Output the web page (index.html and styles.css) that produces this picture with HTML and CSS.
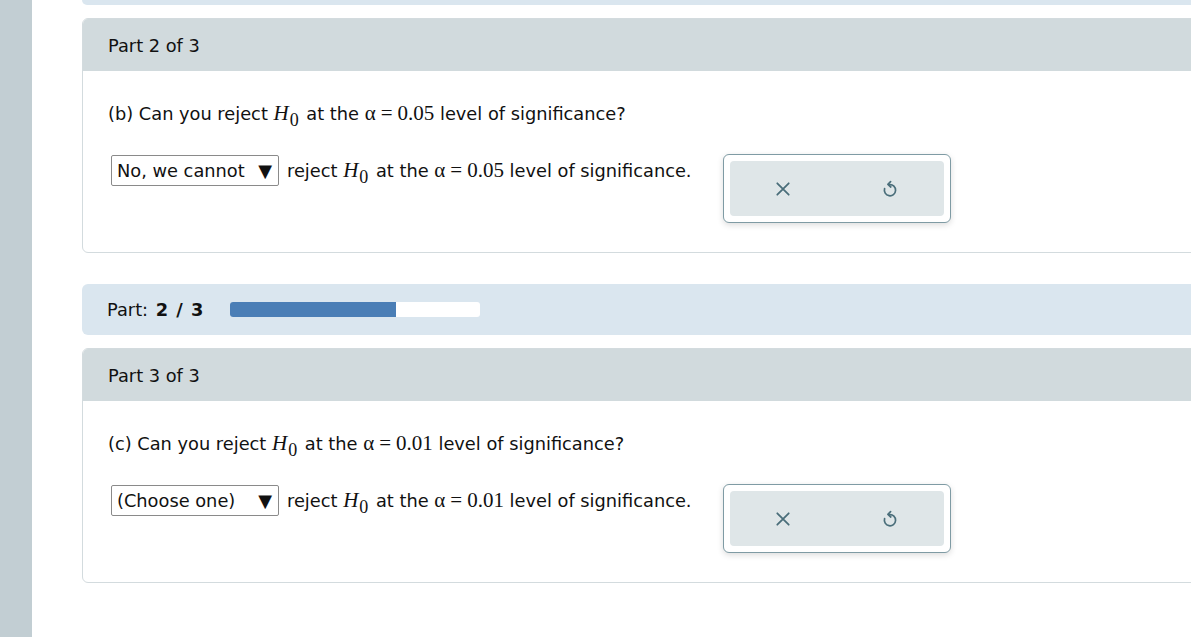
FILE: index.html
```html
<!DOCTYPE html>
<html>
<head>
<meta charset="utf-8">
<link rel="stylesheet" href="styles.css">
</head>
<body>
<div class="page">
  <div class="sidebar"></div>
  <div class="main">
    <div class="top-strip"></div>

    <section class="card">
      <div class="card-head">Part 2 of 3</div>
      <div class="card-body">
        <p class="question">(b) Can you reject <span class="math"><i>H</i><sub>0</sub></span> at the <span class="math">α<span class="eq">=</span>0.05</span> level of significance?</p>
        <div class="answer-row">
          <div class="select"><span>No, we cannot</span><span class="arrow">▼</span></div>
          <p class="answer-text">reject <span class="math"><i>H</i><sub>0</sub></span> at the <span class="math">α<span class="eq">=</span>0.05</span> level of significance.</p>
          <div class="tools">
            <div class="tools-inner">
              <button class="tool" aria-label="Clear">
                <svg width="16" height="16" viewBox="0 0 16 16"><path d="M2.3 2.3 L13.7 13.7 M13.7 2.3 L2.3 13.7" stroke="#4a6e7a" stroke-width="1.8" fill="none" stroke-linecap="round"/></svg>
              </button>
              <button class="tool" aria-label="Undo">
                <svg width="18" height="18" viewBox="0 0 18 18"><path d="M8.6 4.6 A5.6 5.6 0 1 1 3.6 8.6" stroke="#4a6e7a" stroke-width="1.7" fill="none" stroke-linecap="round"/><path d="M9.6 1.6 L6.9 4.4 L9.8 7.0" stroke="#4a6e7a" stroke-width="1.7" fill="none" stroke-linecap="round" stroke-linejoin="round"/></svg>
              </button>
            </div>
          </div>
        </div>
      </div>
    </section>

    <div class="progress">
      <span class="progress-label">Part: <b>2 / 3</b></span>
      <div class="bar"><div class="bar-fill" style="width:66.4%"></div></div>
    </div>

    <section class="card">
      <div class="card-head">Part 3 of 3</div>
      <div class="card-body">
        <p class="question">(c) Can you reject <span class="math"><i>H</i><sub>0</sub></span> at the <span class="math">α<span class="eq">=</span>0.01</span> level of significance?</p>
        <div class="answer-row">
          <div class="select"><span>(Choose one)</span><span class="arrow">▼</span></div>
          <p class="answer-text">reject <span class="math"><i>H</i><sub>0</sub></span> at the <span class="math">α<span class="eq">=</span>0.01</span> level of significance.</p>
          <div class="tools">
            <div class="tools-inner">
              <button class="tool" aria-label="Clear">
                <svg width="16" height="16" viewBox="0 0 16 16"><path d="M2.3 2.3 L13.7 13.7 M13.7 2.3 L2.3 13.7" stroke="#4a6e7a" stroke-width="1.8" fill="none" stroke-linecap="round"/></svg>
              </button>
              <button class="tool" aria-label="Undo">
                <svg width="18" height="18" viewBox="0 0 18 18"><path d="M8.6 4.6 A5.6 5.6 0 1 1 3.6 8.6" stroke="#4a6e7a" stroke-width="1.7" fill="none" stroke-linecap="round"/><path d="M9.6 1.6 L6.9 4.4 L9.8 7.0" stroke="#4a6e7a" stroke-width="1.7" fill="none" stroke-linecap="round" stroke-linejoin="round"/></svg>
              </button>
            </div>
          </div>
        </div>
      </div>
    </section>
  </div>
</div>
</body>
</html>
```

FILE: styles.css
```css
html, body {
  margin: 0;
  padding: 0;
  overflow: hidden;
  background: #fff;
}
body {
  font-family: "DejaVu Sans", Verdana, sans-serif;
  font-size: 17.8px;
  color: #111;
}
.page {
  display: flex;
  min-height: 637px;
}
.sidebar {
  width: 32px;
  flex: none;
  background: #c2ced3;
}
.main {
  flex: 1;
  padding-left: 50px;
  margin-right: -30px;
}
.top-strip {
  height: 5px;
  background: #dae6ef;
  border-radius: 0 0 0 6px;
  margin-bottom: 13px;
}
.card {
  border: 1px solid #d3dbde;
  border-radius: 6px;
  overflow: hidden;
}
.card-head {
  background: #d1dadd;
  display: flex;
  align-items: center;
  padding-left: 26px;
  margin: -1px -1px 0 -1px;
  padding-top: 2px;
  box-sizing: border-box;
  height: 53px;
}
.card-body {
  padding: 30px 25px 29px;
}
.question {
  margin: 0;
  line-height: 24px;
}
.math {
  font-family: "Liberation Serif", "Times New Roman", serif;
  font-size: 21px;
}
.math i {
  font-style: italic;
}
.math sub {
  font-size: 18px;
  vertical-align: -6px;
  line-height: 0;
  margin-left: 1px;
  margin-right: 2px;
}
.eq {
  margin: 0 5px;
}
.answer-row {
  display: flex;
  align-items: flex-start;
  margin-top: 28px;
}
.select {
  width: 168px;
  height: 31px;
  box-sizing: border-box;
  border: 1px solid #8a8a8a;
  border-radius: 2px;
  margin: 1px 0 0 3px;
  padding: 0 6px 0 5px;
  display: flex;
  align-items: center;
  justify-content: space-between;
}
.arrow {
  font-size: 18px;
}
.answer-text {
  margin: 4px 0 0 8px;
  line-height: 24px;
}
.tools {
  margin-left: 31px;
  width: 228px;
  height: 69px;
  box-sizing: border-box;
  border: 1px solid #7f9ba4;
  border-radius: 6px;
  padding: 6px;
  box-shadow: 0 2px 6px rgba(0, 0, 0, 0.14);
  background: #fff;
}
.tools-inner {
  height: 100%;
  background: #dfe6e8;
  border-radius: 4px;
  display: flex;
}
.tool {
  flex: 1;
  border: 0;
  background: transparent;
  padding: 0;
  display: flex;
  align-items: center;
  justify-content: center;
}
.progress {
  margin-top: 31px;
  margin-bottom: 13px;
  height: 51px;
  background: #dae6ef;
  border-radius: 6px 0 0 6px;
  display: flex;
  align-items: center;
  padding-left: 25px;
}
.progress-label {
  width: 123px;
  flex: none;
}
.progress-label b {
  font-weight: bold;
  word-spacing: 2px;
  margin-left: 2px;
}
.bar {
  width: 250px;
  height: 15px;
  background: #fff;
  border-radius: 3px;
  overflow: hidden;
}
.bar-fill {
  height: 100%;
  background: #4a7eb6;
}
```
